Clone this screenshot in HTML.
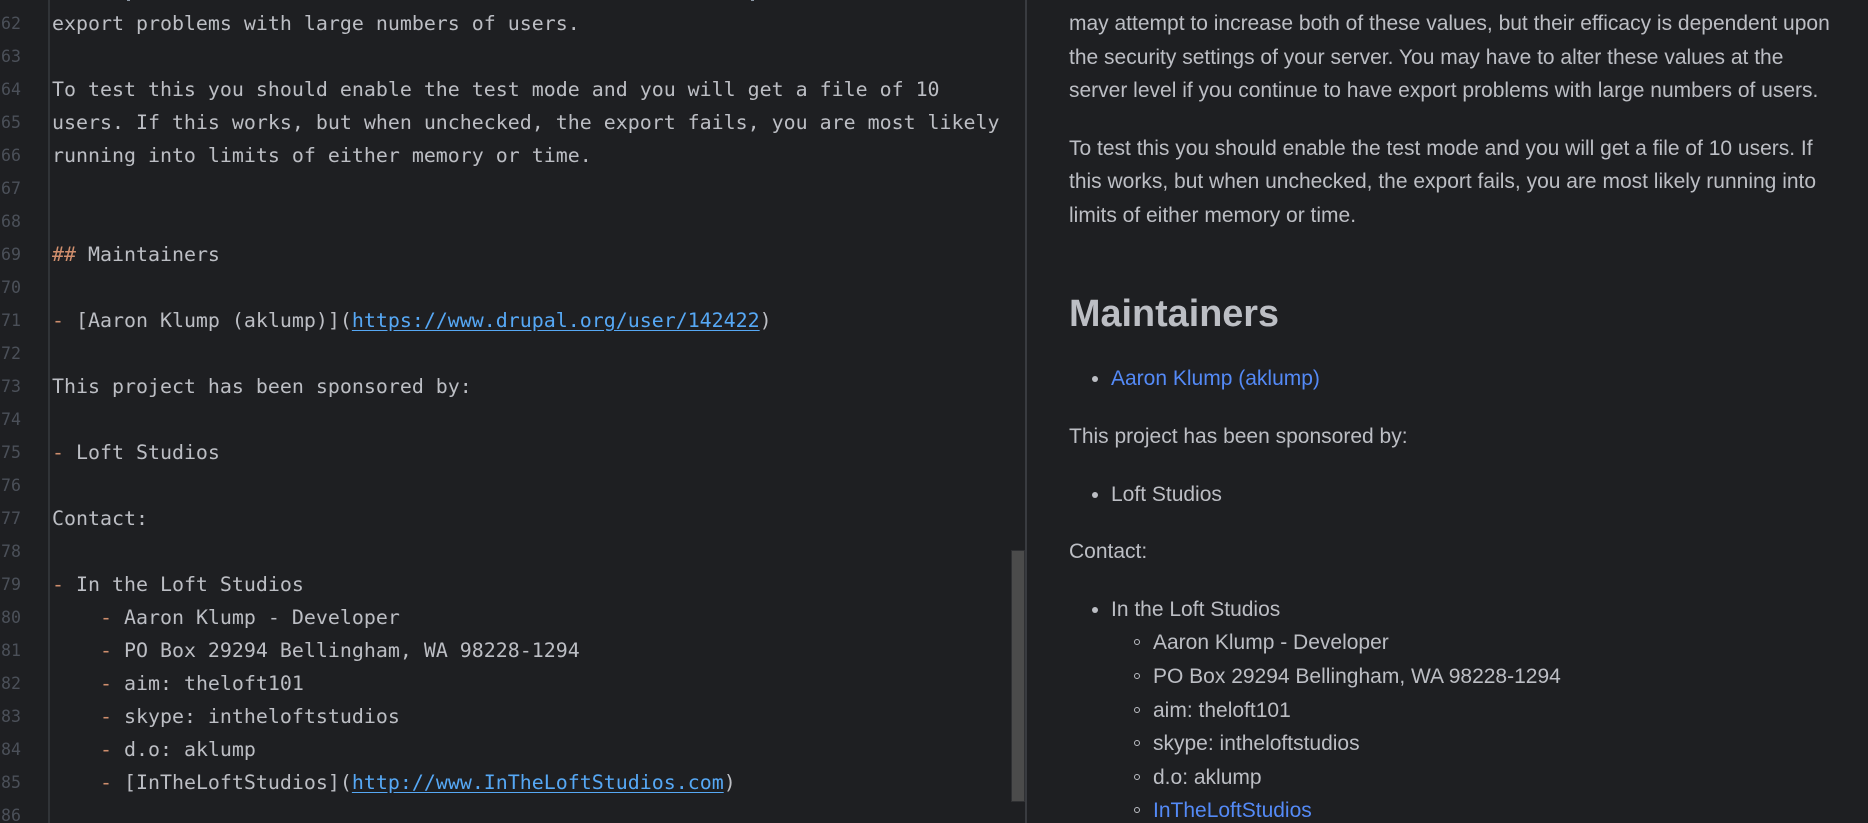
<!DOCTYPE html>
<html lang="en"><head><meta charset="utf-8"><title>Markdown editor</title>
<style>
html,body{margin:0;padding:0;width:1868px;height:823px;overflow:hidden;background:#1e1f22}
#v{position:relative;width:1868px;height:823px;overflow:hidden;background:#1e1f22}
.n,.c,.r,.h{position:absolute;white-space:pre}
.n{left:1px;width:24px;margin-top:-1px;font:16.6px/33px "DejaVu Sans Mono",monospace;color:#4b5059}
.c{left:52px;margin-top:-1px;font:19.93px/33px "DejaVu Sans Mono",monospace;color:#bcbec4}
.c i{font-style:normal;color:#cf8e6d}
.c u{color:#56a8f5;text-decoration:underline;text-underline-offset:3px}
.r{left:1069px;margin-top:1px;font:21px/34px "Liberation Sans",sans-serif;color:#bcbec4}
.l1{left:1111px}.l2{left:1153px}
.r a{color:#548af7;text-decoration:none}
.h{left:1069px;font:bold 37.8px/44px "Liberation Sans",sans-serif;color:#bcbec4}
.b{position:absolute;width:6px;height:6px;border-radius:50%;background:#bcbec4}
.o{position:absolute;width:4px;height:4px;border-radius:50%;border:1px solid #bcbec4}
.k{position:absolute;top:0;width:3px;height:1px;background:#8d98a5}
</style></head><body><div id="v">
<div style="position:absolute;left:48px;top:0;width:2px;height:823px;background:#313438"></div>
<div style="position:absolute;left:1025px;top:0;width:2px;height:823px;background:#393b40"></div>
<div style="position:absolute;left:1011px;top:550px;width:14px;height:252px;background:#2f3033"></div>
<div style="position:absolute;left:1012px;top:551px;width:12px;height:250px;background:#4b4b4b"></div>
<div class="k" style="left:127px"></div><div class="k" style="left:751px"></div>

<div class="n" style="top:8px">62</div>
<div class="n" style="top:41px">63</div>
<div class="n" style="top:74px">64</div>
<div class="n" style="top:107px">65</div>
<div class="n" style="top:140px">66</div>
<div class="n" style="top:173px">67</div>
<div class="n" style="top:206px">68</div>
<div class="n" style="top:239px">69</div>
<div class="n" style="top:272px">70</div>
<div class="n" style="top:305px">71</div>
<div class="n" style="top:338px">72</div>
<div class="n" style="top:371px">73</div>
<div class="n" style="top:404px">74</div>
<div class="n" style="top:437px">75</div>
<div class="n" style="top:470px">76</div>
<div class="n" style="top:503px">77</div>
<div class="n" style="top:536px">78</div>
<div class="n" style="top:569px">79</div>
<div class="n" style="top:602px">80</div>
<div class="n" style="top:635px">81</div>
<div class="n" style="top:668px">82</div>
<div class="n" style="top:701px">83</div>
<div class="n" style="top:734px">84</div>
<div class="n" style="top:767px">85</div>
<div class="n" style="top:800px">86</div>

<div class="c" style="top:8px">export problems with large numbers of users.</div>
<div class="c" style="top:74px">To test this you should enable the test mode and you will get a file of 10</div>
<div class="c" style="top:107px">users. If this works, but when unchecked, the export fails, you are most likely</div>
<div class="c" style="top:140px">running into limits of either memory or time.</div>
<div class="c" style="top:239px"><i>##</i> Maintainers</div>
<div class="c" style="top:305px"><i>-</i> [Aaron Klump (aklump)](<u>https://www.drupal.org/user/142422</u>)</div>
<div class="c" style="top:371px">This project has been sponsored by:</div>
<div class="c" style="top:437px"><i>-</i> Loft Studios</div>
<div class="c" style="top:503px">Contact:</div>
<div class="c" style="top:569px"><i>-</i> In the Loft Studios</div>
<div class="c" style="top:602px">    <i>-</i> Aaron Klump - Developer</div>
<div class="c" style="top:635px">    <i>-</i> PO Box 29294 Bellingham, WA 98228-1294</div>
<div class="c" style="top:668px">    <i>-</i> aim: theloft101</div>
<div class="c" style="top:701px">    <i>-</i> skype: intheloftstudios</div>
<div class="c" style="top:734px">    <i>-</i> d.o: aklump</div>
<div class="c" style="top:767px">    <i>-</i> [InTheLoftStudios](<u>http://www.InTheLoftStudios.com</u>)</div>

<div class="r" style="top:6px">may attempt to increase both of these values, but their efficacy is dependent upon</div>
<div class="r" style="top:40px">the security settings of your server. You may have to alter these values at the</div>
<div class="r" style="top:73px">server level if you continue to have export problems with large numbers of users.</div>
<div class="r" style="top:131px">To test this you should enable the test mode and you will get a file of 10 users. If</div>
<div class="r" style="top:164px">this works, but when unchecked, the export fails, you are most likely running into</div>
<div class="r" style="top:198px">limits of either memory or time.</div>
<div class="h" style="top:292px">Maintainers</div>
<div class="b" style="left:1092px;top:376px"></div>
<div class="r l1" style="top:361px"><a>Aaron Klump (aklump)</a></div>
<div class="r" style="top:419px">This project has been sponsored by:</div>
<div class="b" style="left:1092px;top:492px"></div>
<div class="r l1" style="top:477px">Loft Studios</div>
<div class="r" style="top:534px">Contact:</div>
<div class="b" style="left:1092px;top:607px"></div>
<div class="r l1" style="top:592px">In the Loft Studios</div>
<div class="o" style="left:1134px;top:639px"></div>
<div class="r l2" style="top:625px">Aaron Klump - Developer</div>
<div class="o" style="left:1134px;top:673px"></div>
<div class="r l2" style="top:659px">PO Box 29294 Bellingham, WA 98228-1294</div>
<div class="o" style="left:1134px;top:707px"></div>
<div class="r l2" style="top:693px">aim: theloft101</div>
<div class="o" style="left:1134px;top:740px"></div>
<div class="r l2" style="top:726px">skype: intheloftstudios</div>
<div class="o" style="left:1134px;top:774px"></div>
<div class="r l2" style="top:760px">d.o: aklump</div>
<div class="o" style="left:1134px;top:807px"></div>
<div class="r l2" style="top:793px"><a>InTheLoftStudios</a></div>
</div></body></html>
